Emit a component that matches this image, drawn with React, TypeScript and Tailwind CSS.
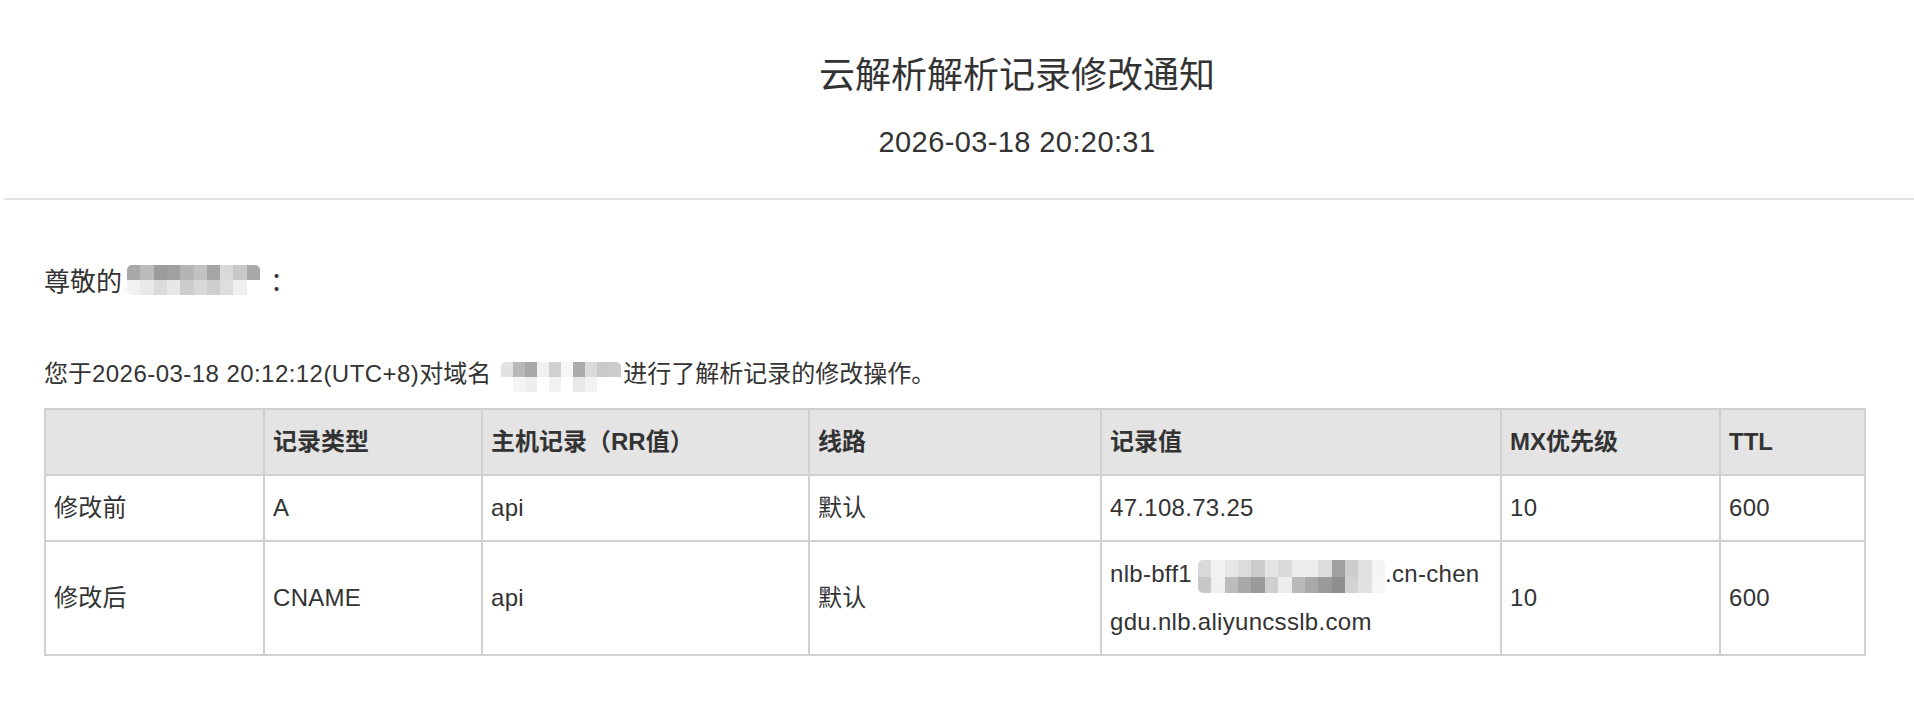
import React from "react";

type MosaicProps = {
  width: number;
  height: number;
  rows: string[][];
  className?: string;
};

function Mosaic({ width, height, rows, className }: MosaicProps) {
  const rowH = height / rows.length;
  return (
    <span
      className={`inline-block overflow-hidden rounded-[5px] blur-[0.6px] ${className ?? ""}`}
      style={{ width, height }}
    >
      {rows.map((row, i) => (
        <span key={i} className="flex" style={{ height: rowH }}>
          {row.map((c, j) => (
            <span key={j} className="flex-1" style={{ backgroundColor: c }} />
          ))}
        </span>
      ))}
    </span>
  );
}

const greetRows = [
  ["#a9a9a9", "#bcbcbc", "#9c9c9c", "#a0a0a0", "#b5b5b5", "#c2c2c2", "#a5a5a5", "#d9d9d9", "#c8c8c8", "#a8a8a8"],
  ["#f1f1f1", "#e9e9e9", "#dadada", "#e7e7e7", "#cdcdcd", "#d8d8d8", "#cfcfcf", "#dedede", "#efefef", "#ffffff"],
];

const domainRows = [
  ["#e2e2e2", "#b9b9b9", "#a8a8a8", "#f0f0f0", "#d0d0d0", "#f6f6f6", "#ababab", "#dadada", "#c9c9c9", "#cccccc"],
  ["#ffffff", "#f4f4f4", "#eeeeee", "#ffffff", "#f2f2f2", "#ffffff", "#e8e8e8", "#f3f3f3", "#ffffff", "#ffffff"],
];

const valueRows = [
  ["#d9d9d9", "#f2f2f2", "#e6e6e6", "#dcdcdc", "#cbcbcb", "#e3e3e3", "#dadada", "#ededed", "#ededed", "#dddddd", "#a0a0a0", "#cdcdcd", "#e0e0e0", "#f4f4f4"],
  ["#c8c8c8", "#f0f0f0", "#bdbdbd", "#a8a8a8", "#9b9b9b", "#cfcfcf", "#ececec", "#bababa", "#a9a9a9", "#9a9a9a", "#8e8e8e", "#d3d3d3", "#e2e2e2", "#f6f6f6"],
];

const cols = "grid-cols-[219px_218px_327px_292px_400px_219px_145px]";

const headers = ["", "记录类型", "主机记录（RR值）", "线路", "记录值", "MX优先级", "TTL"];

function Cell({ children, head }: { children?: React.ReactNode; head?: boolean }) {
  return (
    <div
      className={`flex items-center border-r-2 border-b-2 border-[#d0d0d0] px-[8px] py-[8px] leading-[48px] ${
        head ? "bg-[#e4e4e4] font-bold" : "bg-white tracking-[0.3px]"
      }`}
    >
      <div>{children}</div>
    </div>
  );
}

export default function App() {
  return (
    <div className="min-h-screen w-full overflow-hidden bg-white font-['Liberation_Sans','Noto_Sans_CJK_SC',sans-serif] text-[#333333]">
      <div className="ml-[4px] w-[2026px]">
        <header className="pt-[49px] pb-[35px] text-center">
          <h1 className="text-[36px] leading-[54px] font-normal">云解析解析记录修改通知</h1>
          <div className="mt-[18px] text-[29px] leading-[42px] tracking-[0.4px]">2026-03-18 20:20:31</div>
        </header>
        <div className="h-[2px] bg-[#e1e5ea]" />

        <main className="px-[40px] pt-[63px]">
          <p className="text-[26px] leading-[39px]">
            尊敬的
            <Mosaic width={133} height={30} rows={greetRows} className="ml-[5px] align-[-4px]" />
            <span className="ml-[10px]">：</span>
          </p>

          <p className="mt-[54px] text-[24px] leading-[36px]">
            您于<span className="tracking-[0.45px]">2026-03-18 20:12:12(UTC+8)</span>对域名
            <Mosaic width={120} height={30} rows={domainRows} className="ml-[10px] mr-[2px] align-[-10px]" />
            进行了解析记录的修改操作。
          </p>

          <div className={`mt-[16px] grid w-fit ${cols} border-t-2 border-l-2 border-[#d0d0d0] text-[24px]`}>
            {headers.map((h, i) => (
              <Cell key={i} head>
                {h}
              </Cell>
            ))}

            <Cell>修改前</Cell>
            <Cell>A</Cell>
            <Cell>api</Cell>
            <Cell>默认</Cell>
            <Cell>47.108.73.25</Cell>
            <Cell>10</Cell>
            <Cell>600</Cell>

            <Cell>修改后</Cell>
            <Cell>CNAME</Cell>
            <Cell>api</Cell>
            <Cell>默认</Cell>
            <Cell>
              <div className="whitespace-nowrap">
                nlb-bff1
                <Mosaic width={187} height={33} rows={valueRows} className="ml-[6px] align-[-11px]" />
                .cn-chen
              </div>
              <div>gdu.nlb.aliyuncsslb.com</div>
            </Cell>
            <Cell>10</Cell>
            <Cell>600</Cell>
          </div>
        </main>
      </div>
    </div>
  );
}
